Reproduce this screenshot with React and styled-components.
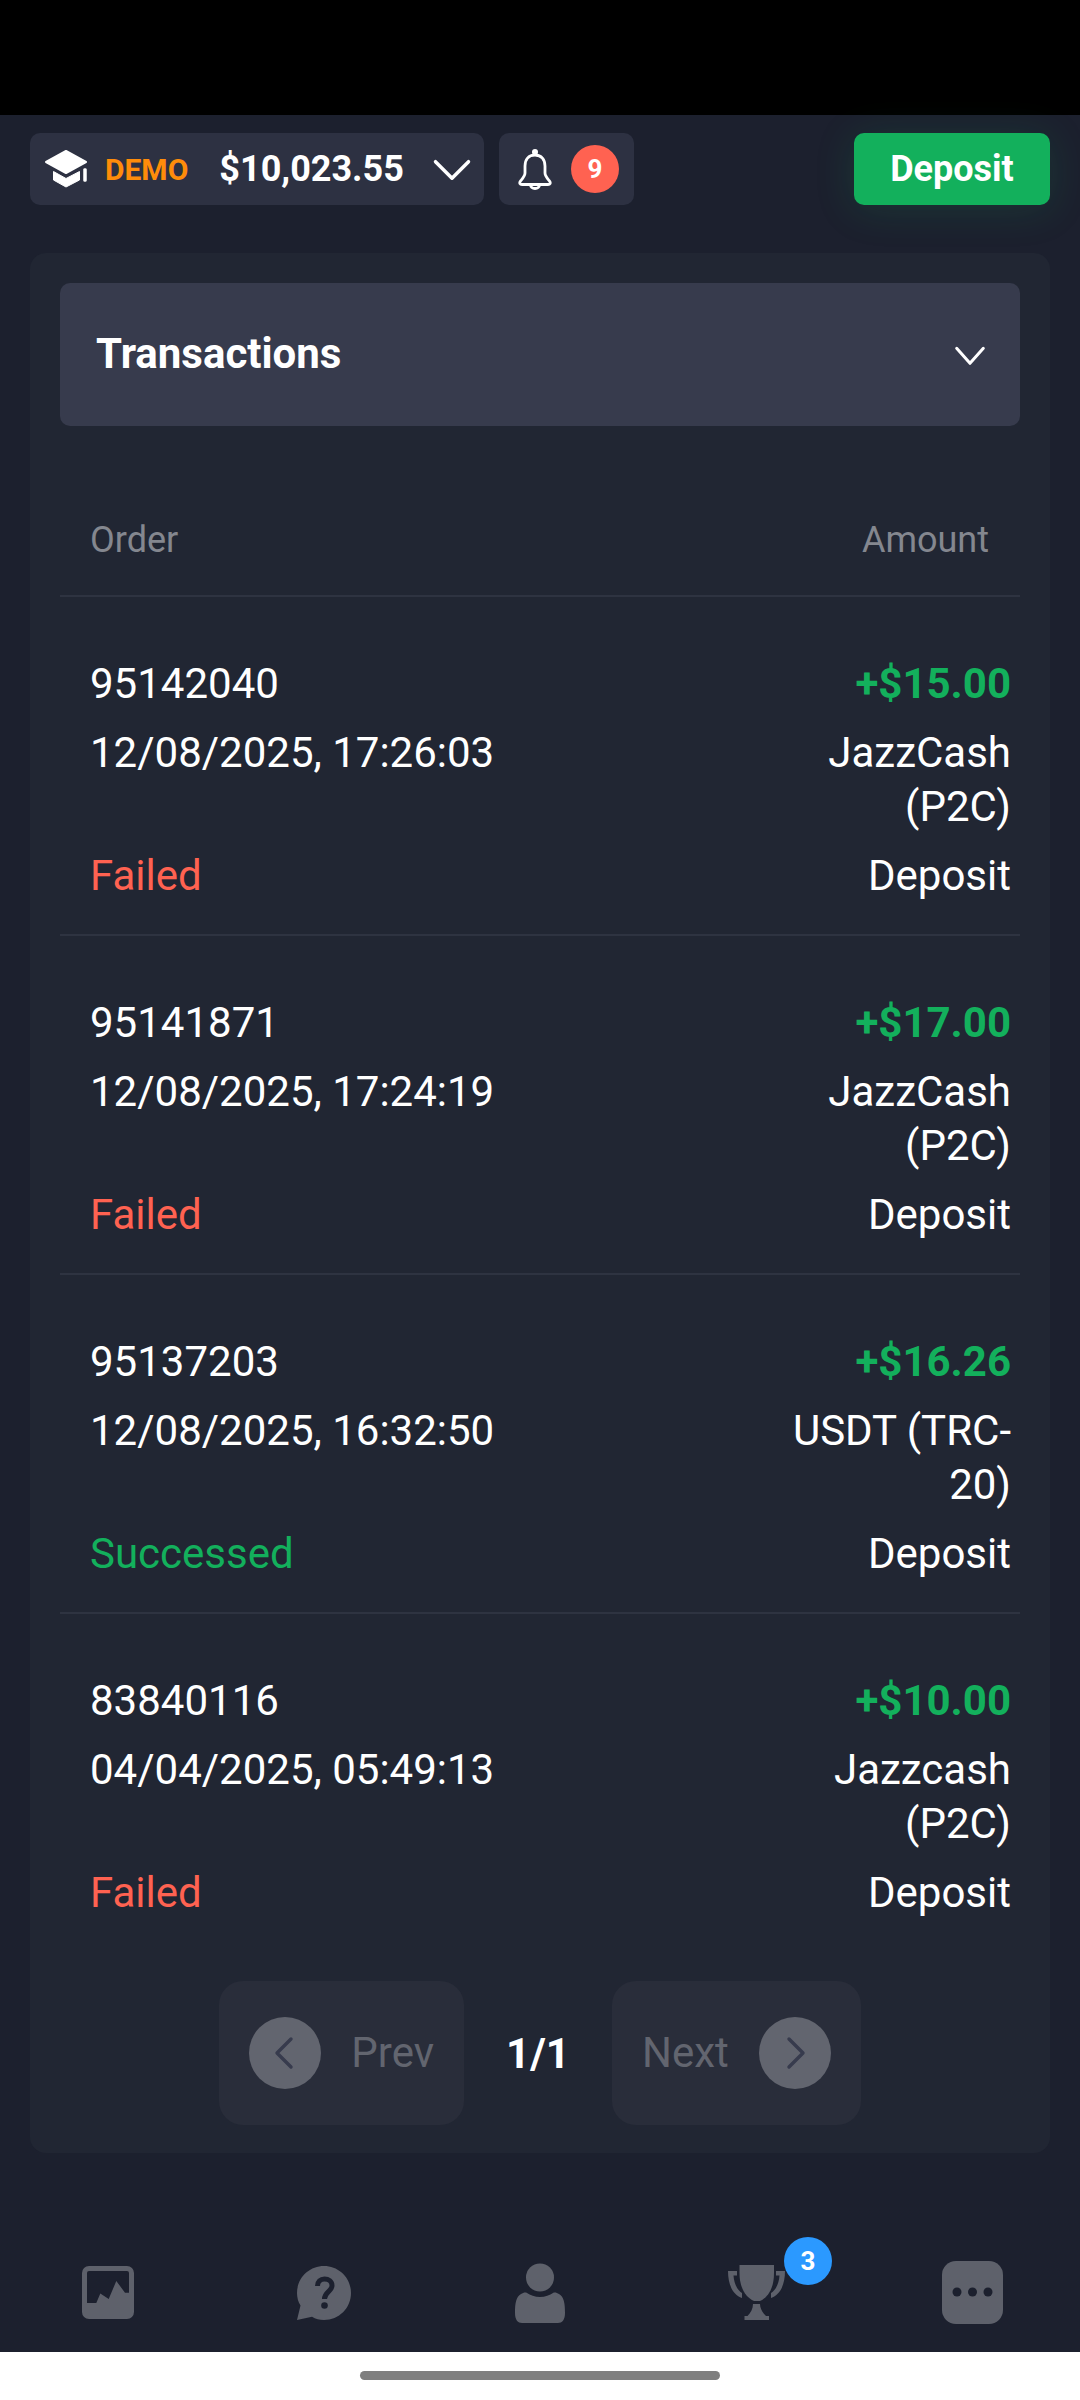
import React from "react";
import styled, { createGlobalStyle } from "styled-components";

const Global = createGlobalStyle`
  html, body { margin: 0; padding: 0; background: #1c202e; }
  body { width: 1080px; height: 2400px; overflow: hidden; font-family: Roboto, "Liberation Sans", sans-serif; }
  #root { width: 1080px; height: 2400px; }
`;

const Page = styled.div`
  width: 1080px;
  height: 2400px;
  display: flex;
  flex-direction: column;
  background: #1c202e;
  color: #fff;
`;
const StatusBar = styled.div`
  height: 115px;
  flex: none;
  background: #000;
`;
const TopBar = styled.header`
  display: flex;
  align-items: stretch;
  gap: 15px;
  padding: 18px 30px 0;
  height: 72px;
  flex: none;
`;
const AccountBox = styled.div`
  width: 454px;
  display: flex;
  align-items: center;
  background: #2d3142;
  border-radius: 10px;
  padding: 0 10px 0 15px;
  box-sizing: border-box;
`;
const DemoLabel = styled.span`
  margin-left: 18px;
  font-size: 30px;
  font-weight: 700;
  color: #ff8c0a;
`;
const Balance = styled.span`
  margin-left: 31px;
  font-size: 36px;
  font-weight: 700;
`;
const Caret = styled.span`
  margin-left: auto;
  display: flex;
`;
const BellBox = styled.div`
  width: 135px;
  display: flex;
  align-items: center;
  background: #2d3142;
  border-radius: 10px;
  padding: 0 15px 0 19px;
  box-sizing: border-box;
  justify-content: space-between;
`;
const CountDot = styled.span`
  width: 48px;
  height: 48px;
  border-radius: 50%;
  background: ${p => p.$bg};
  display: flex;
  align-items: center;
  justify-content: center;
  font-size: 26px;
  font-weight: 700;
`;
const DepositButton = styled.button`
  margin-left: auto;
  width: 196px;
  border: 0;
  border-radius: 10px;
  background: #13b05c;
  color: #fff;
  font-family: inherit;
  font-size: 36px;
  font-weight: 700;
  box-shadow: 0 4px 40px rgba(19, 176, 92, 0.16);
`;
const Card = styled.section`
  margin: 48px 30px 0;
  height: 1900px;
  flex: none;
  box-sizing: border-box;
  padding: 30px;
  background: #212633;
  border-radius: 16px;
`;
const Dropdown = styled.div`
  height: 143px;
  display: flex;
  align-items: center;
  justify-content: space-between;
  padding: 0 30px 0 36px;
  background: #373b4d;
  border-radius: 10px;
  font-size: 42px;
  font-weight: 700;
`;
const TitleText = styled.span`
  position: relative;
  top: -1px;
`;
const TableHead = styled.div`
  margin-top: 84px;
  height: 87px;
  box-sizing: border-box;
  padding: 0 31px 0 30px;
  display: flex;
  justify-content: space-between;
  border-bottom: 2px solid #2e3341;
  font-size: 36px;
  line-height: 60px;
  color: #84878f;
`;
const Row = styled.div`
  display: grid;
  grid-template-columns: 1fr 232px;
  grid-template-rows: 54px auto 54px;
  align-content: start;
  row-gap: 15px;
  height: 339px;
  box-sizing: border-box;
  padding: 60px 9px 0 30px;
  border-bottom: ${p => (p.$last ? "0" : "2px solid #2e3341")};
  font-size: 42px;
  line-height: 54px;
`;
const Right = styled.div`
  text-align: right;
`;
const Amount = styled(Right)`
  font-weight: 700;
  color: #13b05c;
`;
const Status = styled.div`
  color: ${p => (p.$ok ? "#13b05c" : "#ff6251")};
`;
const Pager = styled.div`
  margin-top: 28px;
  display: flex;
  justify-content: center;
  align-items: center;
`;
const PagerButton = styled.div`
  width: ${p => p.$w}px;
  height: 144px;
  box-sizing: border-box;
  padding: 0 30px;
  border-radius: 24px;
  background: #292d3a;
  color: #62656f;
  font-size: 42px;
  line-height: 46px;
  display: flex;
  align-items: center;
  justify-content: space-between;
`;
const PageCircle = styled.span`
  width: 72px;
  height: 72px;
  border-radius: 50%;
  background: #62656f;
  display: flex;
  align-items: center;
  justify-content: center;
`;
const PageNum = styled.span`
  width: 148px;
  text-align: center;
  font-size: 42px;
  font-weight: 700;
`;
const Nav = styled.nav`
  height: 199px;
  flex: none;
  display: grid;
  grid-template-columns: repeat(5, 1fr);
  padding-top: 80px;
  box-sizing: border-box;
  align-items: center;
`;
const NavItem = styled.div`
  position: relative;
  display: flex;
  justify-content: center;
`;
const NavBadge = styled.span`
  position: absolute;
  top: -28px;
  left: 136px;
  width: 48px;
  height: 48px;
  border-radius: 50%;
  background: #2b99ff;
  display: flex;
  align-items: center;
  justify-content: center;
  font-size: 26px;
  font-weight: 700;
`;
const HomeArea = styled.div`
  flex: 1;
  background: #fff;
  display: flex;
  align-items: center;
  justify-content: center;
`;
const HomeBar = styled.div`
  width: 360px;
  height: 9px;
  border-radius: 5px;
  background: #7f7f7f;
  margin-top: -1px;
`;

const rows = [
  { id: "95142040", date: "12/08/2025, 17:26:03", amount: "+$15.00", method: "JazzCash (P2C)", status: "Failed" },
  { id: "95141871", date: "12/08/2025, 17:24:19", amount: "+$17.00", method: "JazzCash (P2C)", status: "Failed" },
  { id: "95137203", date: "12/08/2025, 16:32:50", amount: "+$16.26", method: "USDT (TRC-20)", status: "Successed", ok: true },
  { id: "83840116", date: "04/04/2025, 05:49:13", amount: "+$10.00", method: "Jazzcash (P2C)", status: "Failed" },
];

const Chevron = ({ size = 28, width = 3, color = "#fff", d = "M4 8l8 8 8-8" }) => (
  <svg width={size} height={size} viewBox="0 0 24 24" fill="none" stroke={color} strokeWidth={width} strokeLinecap="round" strokeLinejoin="round">
    <path d={d} />
  </svg>
);

const Grad = () => (
  <svg width="42" height="38" viewBox="0 0 42 38" fill="#fff" stroke="#fff" strokeLinejoin="round">
    <path strokeWidth="2" d="M21 1 41 12 21 23 1 12z" />
    <path strokeWidth="1" d="M8.500 21.500 21 28.500 34.500 21.500V30L21 37 8.500 30z" />
    <rect x="38.500" y="18.500" width="3" height="13" rx="1" strokeWidth="0.5" />
  </svg>
);
const Bell = () => (
  <svg width="34" height="41" viewBox="0 0 34 41" fill="none" stroke="#fff" strokeWidth="2.8">
    <circle cx="17" cy="3" r="3" fill="#fff" stroke="none" />
    <path d="M17 6c-6.500 0-10 4.500-10 11v7c0 3-2 5-4.500 8-1.500 2-.5 3.500 1.500 3.500h26c2 0 3-1.500 1.500-3.500-2.500-3-4.500-5-4.500-8v-7c0-6.500-3.500-11-10-11z" />
    <path d="M12.500 35.500c0 2.500 2 4 4.500 4s4.500-1.500 4.500-4" />
  </svg>
);
const Chart = () => (
  <svg width="52" height="53" viewBox="0 0 52 53">
    <path fillRule="evenodd" fill="#5e616b" d="M7 0h38a7 7 0 0 1 7 7v39a7 7 0 0 1-7 7H7a7 7 0 0 1-7-7V7a7 7 0 0 1 7-7zM5 7v30h9.300l4-9.500L26.700 33 34.300 15 43 26.700h4V7a2 2 0 0 0-2-2H7a2 2 0 0 0-2 2z" />
  </svg>
);
const Help = () => (
  <svg width="54" height="54" viewBox="0 0 54 54">
    <path fill="#5e616b" d="M27 0c15 0 27 12 27 27S42 54 27 54c-4.500 0-8.500-1.200-12-3.300L0 54l3.500-14.500C1.200 36 0 31.500 0 27 0 12 12 0 27 0z" />
    <path fill="none" stroke="#1c202e" strokeWidth="5" d="M20.500 20c0-4.500 3-7 7-7s7.500 2.500 7.500 6.500c0 6-7.500 6.500-7.500 13.500" />
    <circle cx="27.500" cy="39.500" r="3.300" fill="#1c202e" />
  </svg>
);
const Person = () => (
  <svg width="50" height="60" viewBox="0 0 50 60" fill="#5e616b">
    <circle cx="25" cy="14.500" r="14" />
    <path d="M0 50C0 40 1 34 6 31C8 30 10 29 12 30C15 32 20 34 25 34C30 34 35 32 38 30C40 29 42 30 44 31C49 34 50 40 50 50C50 57 47 60 43 60H7C3 60 0 57 0 50z" />
  </svg>
);
const Trophy = () => (
  <svg width="57" height="55" viewBox="0 0 57 55" fill="#5e616b">
    <path d="M11.500 0H46V8c0 14-5 24-14 28h-6C17 32 11.500 22 11.500 8z" />
    <path d="M25 39h7c0 5 3 9 6 12h3v4H16.500v-4h3c3-3 5.500-7 5.500-12z" />
    <path d="M0 6h9v4.500H5.500C6 18 9 25 14 28v5C5 30 0 20 0 6zM57 6h-9v4.500h3.500C51 18 48 25 43 28v5C52 30 57 20 57 6z" />
  </svg>
);
const More = () => (
  <svg width="61" height="63" viewBox="0 0 61 63">
    <rect width="61" height="63" rx="14" fill="#5e616b" />
    <circle cx="15" cy="31" r="4.500" fill="#1c202e" />
    <circle cx="30.500" cy="31" r="4.500" fill="#1c202e" />
    <circle cx="46" cy="31" r="4.500" fill="#1c202e" />
  </svg>
);

export default function App() {
  return (
    <Page>
      <Global />
      <StatusBar />
      <TopBar>
        <AccountBox>
          <Grad />
          <DemoLabel>DEMO</DemoLabel>
          <Balance>$10,023.55</Balance>
          <Caret><Chevron size={44} width={1.9} d="M3 8l9 9 9-9" /></Caret>
        </AccountBox>
        <BellBox>
          <Bell />
          <CountDot $bg="#ff6251">9</CountDot>
        </BellBox>
        <DepositButton>Deposit</DepositButton>
      </TopBar>
      <Card>
        <Dropdown>
          <TitleText>Transactions</TitleText>
          <Chevron size={40} width={1.8} d="M4 8l8 9 8-9" />
        </Dropdown>
        <TableHead>
          <span>Order</span>
          <span>Amount</span>
        </TableHead>
        {rows.map((r, i) => (
          <Row key={r.id} $last={i === rows.length - 1}>
            <div>{r.id}</div>
            <Amount>{r.amount}</Amount>
            <div>{r.date}</div>
            <Right>{r.method}</Right>
            <Status $ok={r.ok}>{r.status}</Status>
            <Right>Deposit</Right>
          </Row>
        ))}
        <Pager>
          <PagerButton $w={245}>
            <PageCircle><Chevron size={48} width={1.7} color="#373b4d" d="M15 5l-7 7 7 7" /></PageCircle>
            <span>Prev</span>
          </PagerButton>
          <PageNum>1/1</PageNum>
          <PagerButton $w={249}>
            <span>Next</span>
            <PageCircle><Chevron size={48} width={1.7} color="#373b4d" d="M9 5l7 7-7 7" /></PageCircle>
          </PagerButton>
        </Pager>
      </Card>
      <Nav>
        <NavItem><Chart /></NavItem>
        <NavItem><Help /></NavItem>
        <NavItem><Person /></NavItem>
        <NavItem><Trophy /><NavBadge>3</NavBadge></NavItem>
        <NavItem><More /></NavItem>
      </Nav>
      <HomeArea><HomeBar /></HomeArea>
    </Page>
  );
}
